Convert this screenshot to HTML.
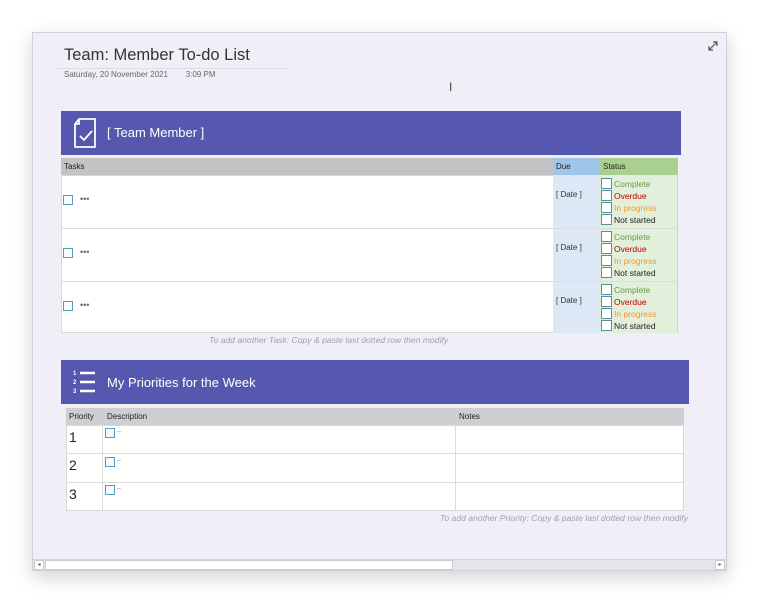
<!DOCTYPE html>
<html><head><meta charset="utf-8"><style>
*{margin:0;padding:0;box-sizing:border-box}
body{width:768px;height:611px;background:#fff;position:relative;overflow:hidden;font-family:"Liberation Sans",sans-serif;color:#222}
.a{position:absolute}
#win{left:32px;top:32px;width:695px;height:539px;background:#f0eff8;border:1px solid #cfcfd6;box-shadow:0 6px 18px rgba(0,0,0,.18)}
.ban{background:#5558ae;color:#fff;font-size:13px}
.hd{font-size:8px;color:#222;line-height:17px;padding-left:3px}
.cb{position:absolute;width:10px;height:10px;border:1px solid #5a9bb5;background:#f8fbfd}
.st{position:absolute;left:14px;font-size:8.5px;line-height:12px}
.cb2{position:absolute;left:1px;width:11px;height:11px;border:1px solid #5a8fa0;background:#fff}
.note{font-size:8.6px;font-style:italic;color:#a0a0a8;white-space:nowrap}
</style></head><body>
<div id="win" class="a"></div>
<div class="a" style="left:64px;top:46px;font-size:16.5px;color:#333">Team: Member To-do List</div>
<div class="a" style="left:57px;top:68px;width:231px;height:1px;background:#dedee6"></div>
<div class="a" style="left:64px;top:70px;font-size:8px;color:#666;white-space:nowrap">Saturday, 20 November 2021&nbsp;&nbsp;&nbsp;&nbsp;&nbsp;&nbsp;&nbsp;&nbsp;3:09 PM</div>
<div class="a" style="left:449px;top:80px;font-size:12px;color:#444">I</div>
<svg class="a" style="left:707px;top:40px" width="12" height="12" viewBox="0 0 12 12"><path d="M2 10L10 2M6 2h4v4M2 6v4h4" stroke="#555" stroke-width="1.2" fill="none"/></svg>

<div class="a ban" style="left:61px;top:111px;width:620px;height:44px"></div>
<svg class="a" style="left:72px;top:117px" width="26" height="32" viewBox="0 0 26 32"><path d="M7 2h16v28H3V7z M7 2v5H3" stroke="#fff" stroke-width="1.8" fill="none" stroke-linejoin="round"/><path d="M8 19l4 4 8-9" stroke="#fff" stroke-width="1.8" fill="none"/></svg>
<div class="a" style="left:107px;top:125px;font-size:13px;color:#fff">[ Team Member ]</div>

<div class="a hd" style="left:61px;top:158px;width:492px;height:17px;background:#c3c3c6">Tasks</div>
<div class="a hd" style="left:553px;top:158px;width:47px;height:17px;background:#9fc5e8">Due</div>
<div class="a hd" style="left:600px;top:158px;width:78px;height:17px;background:#a9d08e">Status</div>

<div class="a" style="left:61px;top:175px;width:617px;height:158px;border:1px solid #d8d8dc;background:#fff"></div>
<div class="a" style="left:553px;top:175px;width:47px;height:158px;background:#dce8f5"></div>
<div class="a" style="left:600px;top:175px;width:78px;height:158px;background:#e2efda;border-right:1px solid #d0d0d0"></div>
<div class="a" style="left:61px;top:228px;width:617px;height:1px;background:#dcdcdc"></div>
<div class="a" style="left:61px;top:281px;width:617px;height:1px;background:#dcdcdc"></div>

<div class="a" style="left:61px;top:175px;width:617px;height:53px">
<div class="cb" style="left:2px;top:20px"></div><div class="a" style="left:19px;top:19px;font-size:9px;color:#666">•••</div>
<div class="a" style="left:495px;top:15px;font-size:8px;color:#333">[ Date ]</div>
<div class="a" style="left:539px;top:2px;width:78px;height:50px">
<div class="cb2" style="top:1px"></div><div class="st" style="top:1px;color:#6a9a4a">Complete</div>
<div class="cb2" style="top:13px"></div><div class="st" style="top:13px;color:#c00000">Overdue</div>
<div class="cb2" style="top:25px"></div><div class="st" style="top:25px;color:#f59a30">In progress</div>
<div class="cb2" style="top:37px"></div><div class="st" style="top:37px;color:#222">Not started</div></div></div>

<div class="a" style="left:61px;top:228px;width:617px;height:53px">
<div class="cb" style="left:2px;top:20px"></div><div class="a" style="left:19px;top:19px;font-size:9px;color:#666">•••</div>
<div class="a" style="left:495px;top:15px;font-size:8px;color:#333">[ Date ]</div>
<div class="a" style="left:539px;top:2px;width:78px;height:50px">
<div class="cb2" style="top:1px"></div><div class="st" style="top:1px;color:#6a9a4a">Complete</div>
<div class="cb2" style="top:13px"></div><div class="st" style="top:13px;color:#c00000">Overdue</div>
<div class="cb2" style="top:25px"></div><div class="st" style="top:25px;color:#f59a30">In progress</div>
<div class="cb2" style="top:37px"></div><div class="st" style="top:37px;color:#222">Not started</div></div></div>

<div class="a" style="left:61px;top:281px;width:617px;height:53px">
<div class="cb" style="left:2px;top:20px"></div><div class="a" style="left:19px;top:19px;font-size:9px;color:#666">•••</div>
<div class="a" style="left:495px;top:15px;font-size:8px;color:#333">[ Date ]</div>
<div class="a" style="left:539px;top:2px;width:78px;height:50px">
<div class="cb2" style="top:1px"></div><div class="st" style="top:1px;color:#6a9a4a">Complete</div>
<div class="cb2" style="top:13px"></div><div class="st" style="top:13px;color:#c00000">Overdue</div>
<div class="cb2" style="top:25px"></div><div class="st" style="top:25px;color:#f59a30">In progress</div>
<div class="cb2" style="top:37px"></div><div class="st" style="top:37px;color:#222">Not started</div></div></div>

<div class="a note" style="left:209px;top:335px">To add another Task: Copy &amp; paste last dotted row then modify</div>

<div class="a ban" style="left:61px;top:360px;width:628px;height:44px"></div>
<svg class="a" style="left:72px;top:369px" width="26" height="26" viewBox="0 0 26 26"><g fill="#fff" font-size="6" font-family="Liberation Sans" font-weight="bold"><text x="1" y="6">1</text><text x="1" y="15">2</text><text x="1" y="24">3</text></g><path d="M8 4h15M8 13h15M8 22h15" stroke="#fff" stroke-width="2.5"/></svg>
<div class="a" style="left:107px;top:375px;font-size:13px;color:#fff">My Priorities for the Week</div>

<div class="a hd" style="left:66px;top:408px;width:618px;height:17px;background:#cfcfd2"></div>
<div class="a hd" style="left:66px;top:408px">Priority</div>
<div class="a hd" style="left:104px;top:408px">Description</div>
<div class="a hd" style="left:456px;top:408px">Notes</div>
<div class="a" style="left:66px;top:425px;width:618px;height:86px;background:#fff;border:1px solid #d8d8dc"></div>
<div class="a" style="left:102px;top:425px;width:1px;height:86px;background:#dcdcdc"></div>
<div class="a" style="left:455px;top:425px;width:1px;height:86px;background:#dcdcdc"></div>
<div class="a" style="left:66px;top:453px;width:618px;height:1px;background:#dcdcdc"></div>
<div class="a" style="left:66px;top:482px;width:618px;height:1px;background:#dcdcdc"></div>
<div class="a" style="left:69px;top:429px;font-size:14px">1</div>
<div class="a" style="left:69px;top:457px;font-size:14px">2</div>
<div class="a" style="left:69px;top:486px;font-size:14px">3</div>
<div class="cb" style="left:105px;top:428px"></div><div class="a" style="left:117px;top:428px;font-size:7px;color:#999">–</div>
<div class="cb" style="left:105px;top:457px"></div><div class="a" style="left:117px;top:457px;font-size:7px;color:#999">–</div>
<div class="cb" style="left:105px;top:485px"></div><div class="a" style="left:117px;top:485px;font-size:7px;color:#999">–</div>
<div class="a note" style="right:80px;top:513px">To add another Priority: Copy &amp; paste last dotted row then modify</div>

<div class="a" style="left:33px;top:559px;width:693px;height:11px;background:#e4e4ea;border-top:1px solid #d4d4d8"></div>
<div class="a" style="left:34px;top:560px;width:10px;height:10px;background:#fff;border:1px solid #ccc;font-size:6px;color:#666;text-align:center;line-height:8px">◂</div>
<div class="a" style="left:45px;top:560px;width:408px;height:10px;background:#fff;border:1px solid #ccc"></div>
<div class="a" style="left:715px;top:560px;width:10px;height:10px;background:#fff;border:1px solid #ccc;font-size:6px;color:#666;text-align:center;line-height:8px">▸</div>
</body></html>
